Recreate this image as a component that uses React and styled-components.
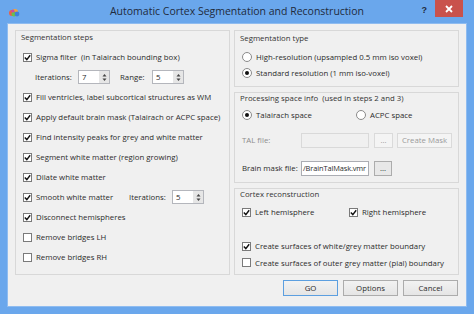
import React from "react";
import styled, { createGlobalStyle } from "styled-components";

const GlobalStyle = createGlobalStyle`
  html, body {
    margin: 0;
    padding: 0;
    width: 474px;
    height: 314px;
    overflow: hidden;
  }
  body {
    font-family: "Open Sans", "Liberation Sans", Arial, sans-serif;
    font-size: 7.8px;
    color: #2b2b2b;
  }
`;

function Logo() {
  return (
    <svg width="12" height="9" viewBox="0 0 12 9">
      <circle cx="4" cy="5" r="3" fill="#e8604a" />
      <circle cx="7" cy="4" r="3" fill="#f2a43a" />
      <circle cx="6" cy="6" r="2.5" fill="#6cbf4a" />
      <circle cx="9" cy="6" r="2.4" fill="#3f7fd9" />
      <circle cx="5" cy="3" r="1.6" fill="#c94aa8" />
    </svg>
  );
}

function CheckBox({ checked }) {
  return (
    <Box>
      {checked && (
        <svg width="7" height="7" viewBox="0 0 7 7">
          <path d="M0.8 3.6 L2.8 5.6 L6.2 1.2" fill="none" stroke="#111" strokeWidth="1.4" />
        </svg>
      )}
    </Box>
  );
}

function Check({ checked, children, width }) {
  return (
    <CheckItem $width={width}>
      <CheckBox checked={checked} />
      <span>{children}</span>
    </CheckItem>
  );
}

function Radio({ checked, children, width }) {
  return (
    <CheckItem $width={width}>
      <RadioDot $checked={checked} />
      <span>{children}</span>
    </CheckItem>
  );
}

function SpinBox({ value }) {
  return (
    <Spin>
      <SpinValue>{value}</SpinValue>
      <SpinArrows>
        <svg width="5" height="9" viewBox="0 0 5 9">
          <path d="M0.5 3.5 L2.5 1 L4.5 3.5Z" fill="#444" />
          <path d="M0.5 5.5 L2.5 8 L4.5 5.5Z" fill="#444" />
        </svg>
      </SpinArrows>
    </Spin>
  );
}

export default function App() {
  return (
    <>
      <GlobalStyle />
      <Window>
        <TitleBar>
          <TitleLeft>
            <Logo />
          </TitleLeft>
          <Title>Automatic Cortex Segmentation and Reconstruction</Title>
          <TitleRight>
            <Help>?</Help>
            <Close>
              <svg width="8" height="8" viewBox="0 0 8 8">
                <path d="M1 1 L7 7 M7 1 L1 7" stroke="#fff" strokeWidth="1.8" />
              </svg>
            </Close>
          </TitleRight>
        </TitleBar>

        <Client>
          <Columns>
            <Group $pt={1}>
              <GroupTitle $mb={5}>Segmentation steps</GroupTitle>
              <Row><Check checked>Sigma filter&nbsp; (in Talairach bounding box)</Check></Row>
              <Row $indent>
                <FieldLabel $width={43}>Iterations:</FieldLabel>
                <SpinBox value="7" />
                <FieldLabel $width={32} $ml={10}>Range:</FieldLabel>
                <SpinBox value="5" />
              </Row>
              <Row><Check checked>Fill ventricles, label subcortical structures as WM</Check></Row>
              <Row><Check checked>Apply default brain mask (Talairach or ACPC space)</Check></Row>
              <Row><Check checked>Find intensity peaks for grey and white matter</Check></Row>
              <Row><Check checked>Segment white matter (region growing)</Check></Row>
              <Row><Check checked>Dilate white matter</Check></Row>
              <Row>
                <Check checked width={106}>Smooth white matter</Check>
                <FieldLabel $width={43}>Iterations:</FieldLabel>
                <SpinBox value="5" />
              </Row>
              <Row><Check checked>Disconnect hemispheres</Check></Row>
              <Row><Check>Remove bridges LH</Check></Row>
              <Row><Check>Remove bridges RH</Check></Row>
            </Group>

            <RightStack>
              <Group $pt={2} $pb={5}>
                <GroupTitle $mb={6}>Segmentation type</GroupTitle>
                <Row $h={16}><Radio>High-resolution (upsampled 0.5 mm iso voxel)</Radio></Row>
                <Row $h={16}><Radio checked>Standard resolution (1 mm iso-voxel)</Radio></Row>
              </Group>

              <Group $pt={0} $pb={6}>
                <GroupTitle $mb={4}>Processing space info&nbsp; (used in steps 2 and 3)</GroupTitle>
                <Row $h={16}>
                  <Radio checked width={114}>Talairach space</Radio>
                  <Radio>ACPC space</Radio>
                </Row>
                <Row $h={16} $mt={9}>
                  <FieldLabel $width={59} $disabled>TAL file:</FieldLabel>
                  <TextInput $disabled />
                  <SmallButton $disabled $width={19}>...</SmallButton>
                  <SmallButton $disabled $width={55}>Create Mask</SmallButton>
                </Row>
                <Row $h={16} $mt={12}>
                  <FieldLabel $width={59}>Brain mask file:</FieldLabel>
                  <TextInput>
                    <InputText>/BrainTalMask.vmr</InputText>
                  </TextInput>
                  <SmallButton $width={18}>...</SmallButton>
                </Row>
              </Group>

              <Group $pt={0} $pb={3}>
                <GroupTitle $mb={5}>Cortex reconstruction</GroupTitle>
                <Row $h={16}>
                  <Check checked width={107}>Left hemisphere</Check>
                  <Check checked>Right hemisphere</Check>
                </Row>
                <Row $h={16} $mt={18}><Check checked>Create surfaces of white/grey matter boundary</Check></Row>
                <Row $h={17}><Check>Create surfaces of outer grey matter (pial) boundary</Check></Row>
              </Group>
            </RightStack>
          </Columns>

          <ButtonRow>
            <PushButton $default>GO</PushButton>
            <PushButton>Options</PushButton>
            <PushButton>Cancel</PushButton>
          </ButtonRow>
        </Client>
      </Window>
    </>
  );
}

const Window = styled.div`
  width: 474px;
  height: 314px;
  box-sizing: border-box;
  background: #6aa7ec;
  padding: 0 7px 7px;
  display: flex;
  flex-direction: column;
`;

const TitleBar = styled.div`
  height: 23px;
  display: grid;
  grid-template-columns: 1fr auto 1fr;
  align-items: start;
  margin: 0 -7px;
`;

const TitleLeft = styled.div`
  padding: 8px 0 0 8px;
  display: flex;
`;

const Title = styled.div`
  font-family: "Open Sans", "Liberation Sans", sans-serif;
  font-size: 10.5px;
  line-height: 23px;
  color: #1f2b3c;
`;

const TitleRight = styled.div`
  display: flex;
  justify-content: flex-end;
  align-items: flex-start;
  padding-right: 11px;
`;

const Help = styled.div`
  font-family: "Liberation Sans", Arial, sans-serif;
  font-weight: bold;
  font-size: 9px;
  color: #1f2b3c;
  line-height: 20px;
  margin-right: 8px;
`;

const Close = styled.div`
  width: 28px;
  height: 17px;
  background: #c9524c;
  display: flex;
  align-items: center;
  justify-content: center;
`;

const Client = styled.div`
  flex: 1;
  background: #f0f0f0;
  border: 1px solid #8fbcf0;
  padding: 6px 7px 0;
  display: flex;
  flex-direction: column;
`;

const Columns = styled.div`
  display: grid;
  grid-template-columns: 215px 225px;
  column-gap: 4px;
`;

const RightStack = styled.div`
  display: flex;
  flex-direction: column;
  gap: 5px;
`;

const Group = styled.section`
  border: 1px solid #d8d8d8;
  padding: ${(p) => p.$pt ?? 1}px 6px ${(p) => p.$pb ?? 4}px 7px;
  display: flex;
  flex-direction: column;
`;

const GroupTitle = styled.div`
  margin: 0 0 ${(p) => p.$mb ?? 4}px -2px;
  line-height: 10px;
  color: #333;
`;

const Row = styled.div`
  display: flex;
  align-items: center;
  height: ${(p) => p.$h ?? 20}px;
  flex-shrink: 0;
  margin-top: ${(p) => p.$mt ?? 0}px;
  padding-left: ${(p) => (p.$indent ? 12 : 0)}px;
  white-space: nowrap;
`;

const CheckItem = styled.label`
  display: flex;
  align-items: center;
  gap: 4px;
  width: ${(p) => (p.$width ? `${p.$width}px` : "auto")};
  flex-shrink: 0;
`;

const Box = styled.span`
  width: 9px;
  height: 9px;
  box-sizing: border-box;
  border: 1px solid #7a7a7a;
  background: #fff;
  display: flex;
  align-items: center;
  justify-content: center;
`;

const RadioDot = styled.span`
  width: 10px;
  height: 10px;
  box-sizing: border-box;
  border: 1px solid #8a8a8a;
  border-radius: 50%;
  background: #fff;
  display: flex;
  align-items: center;
  justify-content: center;
  &::after {
    content: "";
    display: ${(p) => (p.$checked ? "block" : "none")};
    width: 4px;
    height: 4px;
    border-radius: 50%;
    background: #111;
  }
`;

const FieldLabel = styled.span`
  width: ${(p) => p.$width}px;
  margin-left: ${(p) => p.$ml ?? 0}px;
  flex-shrink: 0;
  color: ${(p) => (p.$disabled ? "#8d8d8d" : "#2b2b2b")};
`;

const Spin = styled.div`
  width: 32px;
  height: 14px;
  box-sizing: border-box;
  border: 1px solid #b4b6bc;
  background: #fff;
  display: flex;
`;

const SpinValue = styled.span`
  flex: 1;
  padding-left: 3px;
  line-height: 12px;
`;

const SpinArrows = styled.span`
  width: 10px;
  background: #e6e6e6;
  display: flex;
  align-items: center;
  justify-content: center;
`;

const TextInput = styled.div`
  width: 68px;
  height: 15px;
  box-sizing: border-box;
  border: 1px solid ${(p) => (p.$disabled ? "#d9d9d9" : "#abadb3")};
  background: ${(p) => (p.$disabled ? "#f0f0f0" : "#fff")};
  line-height: 13px;
  padding: 0 1px;
  overflow: hidden;
  margin-right: 5px;
  flex-shrink: 0;
  display: flex;
`;

const InputText = styled.span`
  font-size: 7.4px;
  letter-spacing: -0.1px;
  white-space: nowrap;
`;

const SmallButton = styled.div`
  width: ${(p) => p.$width}px;
  height: 15px;
  box-sizing: border-box;
  border: 1px solid ${(p) => (p.$disabled ? "#dadada" : "#acacac")};
  background: ${(p) => (p.$disabled ? "#f4f4f4" : "#e8e8e8")};
  color: ${(p) => (p.$disabled ? "#9a9a9a" : "#2b2b2b")};
  line-height: 13px;
  text-align: center;
  margin-right: 4px;
  flex-shrink: 0;
`;

const ButtonRow = styled.div`
  display: flex;
  justify-content: flex-end;
  gap: 5px;
  margin-top: 5px;
  padding-right: 1px;
`;

const PushButton = styled.div`
  width: 55px;
  height: 16px;
  box-sizing: border-box;
  border: 1px solid ${(p) => (p.$default ? "#5c9fe0" : "#acacac")};
  background: linear-gradient(#f2f2f2, #e5e5e5);
  line-height: 14px;
  text-align: center;
  color: #2b2b2b;
`;
